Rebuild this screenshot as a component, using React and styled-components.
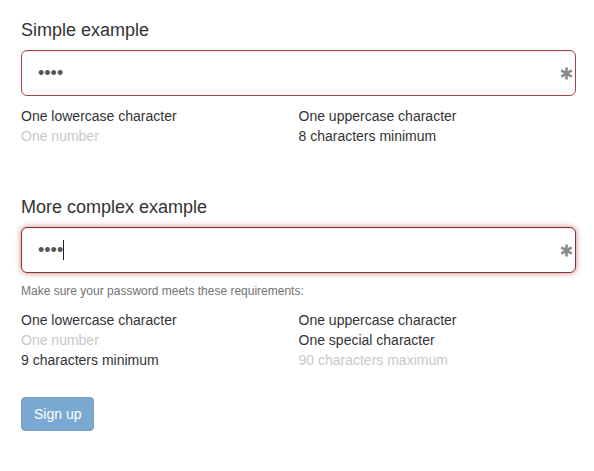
import React from "react";
import styled, { createGlobalStyle, css } from "styled-components";

const Global = createGlobalStyle`
  html, body { margin: 0; padding: 0; background: #fff; }
  body {
    font-family: "Liberation Sans", Arial, Helvetica, sans-serif;
    font-size: 14px;
    line-height: 20px;
    color: #333;
  }
`;

const Page = styled.div`
  padding: 20px 18px 0 21px;
`;

const Section = styled.section`
  display: flex;
  flex-direction: column;
  margin-bottom: ${(p) => p.$gap || 0}px;
`;

const Heading = styled.label`
  font-size: 18px;
  line-height: 20px;
  margin-bottom: 10px;
  color: #333;
`;

const Field = styled.div`
  position: relative;
`;

const Input = styled.input`
  box-sizing: border-box;
  display: block;
  width: 100%;
  height: 46px;
  padding: 10px 16px;
  font-family: "Liberation Sans", Arial, sans-serif;
  font-size: 18px;
  color: #555;
  background: #fff;
  border: 1px solid #a94442;
  border-radius: 6px;
  outline: none;
  box-shadow: inset 0 1px 1px rgba(0, 0, 0, 0.075);
  ${(p) =>
    p.$focused &&
    css`
      border-color: #843534;
      box-shadow: inset 0 1px 1px rgba(0, 0, 0, 0.075), 0 0 6px #ce8483;
    `}
`;

const Caret = styled.span`
  position: absolute;
  left: 42px;
  top: 13px;
  width: 1px;
  height: 20px;
  background: #222;
`;

const Feedback = styled.span`
  position: absolute;
  right: 3px;
  top: 16px;
  width: 14px;
  height: 14px;
  display: flex;
  align-items: center;
  justify-content: center;
`;

const Help = styled.p`
  margin: 10px 0 0;
  font-size: 12px;
  line-height: 17px;
  color: #737373;
`;

const Reqs = styled.ul`
  list-style: none;
  margin: 10px 0 0;
  padding: 0;
  display: grid;
  grid-template-columns: 1fr 1fr;
`;

const Req = styled.li`
  line-height: 20px;
  color: ${(p) => (p.$met ? "#333" : "#c8c8c8")};
`;

const Button = styled.button`
  align-self: flex-start;
  box-sizing: border-box;
  margin-top: 27px;
  height: 34px;
  padding: 6px 12px;
  font-family: "Liberation Sans", Arial, sans-serif;
  font-size: 14px;
  line-height: 20px;
  color: #fff;
  background: #337ab7;
  border: 1px solid #2e6da4;
  border-radius: 4px;
  opacity: 0.65;
  cursor: not-allowed;
`;

const Asterisk = () => (
  <svg width="13" height="13" viewBox="0 0 14 14">
    <g stroke="#8a8a8a" strokeWidth="2.8" strokeLinecap="butt">
      <line x1="7" y1="0.5" x2="7" y2="13.5" />
      <line x1="1.4" y1="3.75" x2="12.6" y2="10.25" />
      <line x1="1.4" y1="10.25" x2="12.6" y2="3.75" />
    </g>
  </svg>
);

const simple = [
  ["One lowercase character", true],
  ["One uppercase character", true],
  ["One number", false],
  ["8 characters minimum", true],
];

const complex = [
  ["One lowercase character", true],
  ["One uppercase character", true],
  ["One number", false],
  ["One special character", true],
  ["9 characters minimum", true],
  ["90 characters maximum", false],
];

export default function App() {
  return (
    <>
      <Global />
      <Page>
        <Section $gap={51}>
          <Heading>Simple example</Heading>
          <Field>
            <Input type="password" defaultValue="abcd" readOnly />
            <Feedback>
              <Asterisk />
            </Feedback>
          </Field>
          <Reqs>
            {simple.map(([t, m]) => (
              <Req key={t} $met={m}>
                {t}
              </Req>
            ))}
          </Reqs>
        </Section>
        <Section>
          <Heading>More complex example</Heading>
          <Field>
            <Input type="password" defaultValue="abcd" readOnly $focused />
            <Caret />
            <Feedback>
              <Asterisk />
            </Feedback>
          </Field>
          <Help>Make sure your password meets these requirements:</Help>
          <Reqs>
            {complex.map(([t, m]) => (
              <Req key={t} $met={m}>
                {t}
              </Req>
            ))}
          </Reqs>
          <Button disabled>Sign up</Button>
        </Section>
      </Page>
    </>
  );
}
